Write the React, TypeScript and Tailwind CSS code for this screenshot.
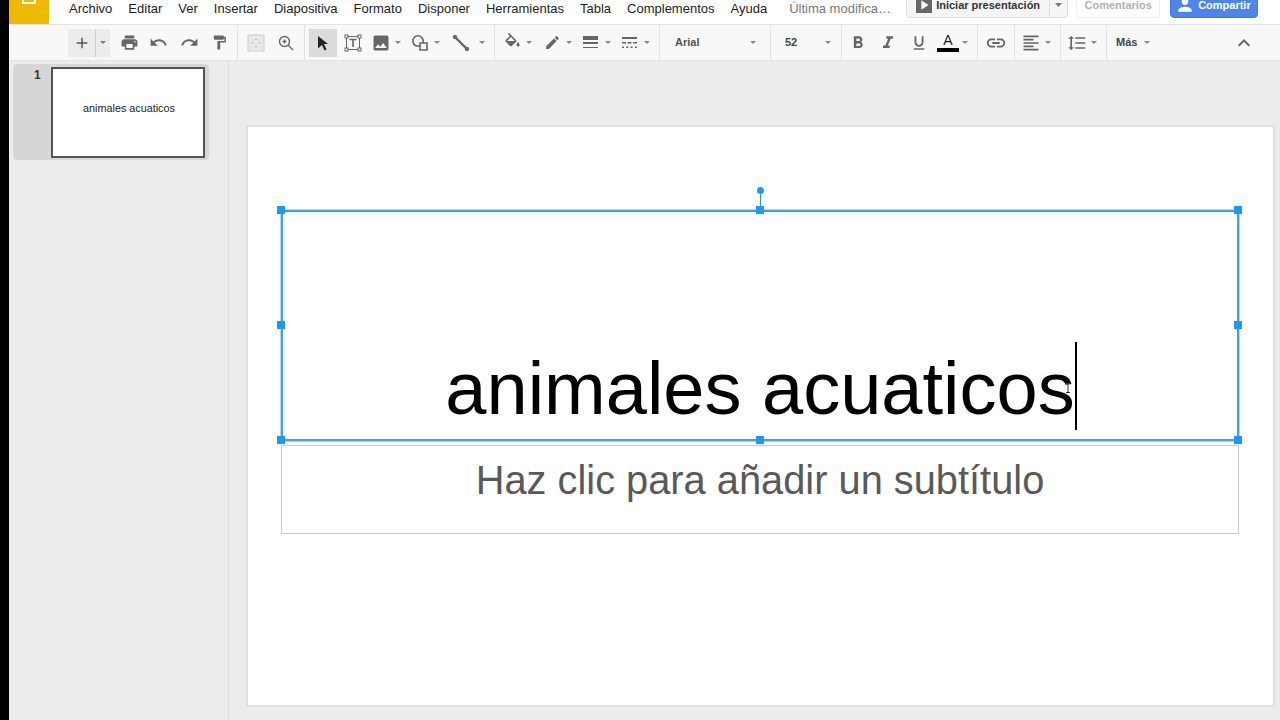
import type { ReactNode } from "react";
import {
  MdAdd,
  MdEdit,
  MdFormatAlignLeft,
  MdFormatBold,
  MdFormatItalic,
  MdFormatLineSpacing,
  MdFormatPaint,
  MdFormatUnderlined,
  MdImage,
  MdKeyboardArrowUp,
  MdLink,
  MdPerson,
  MdPlayArrow,
  MdPrint,
  MdRedo,
  MdUndo,
} from "react-icons/md";

const menus = ["Archivo", "Editar", "Ver", "Insertar", "Diapositiva", "Formato", "Disponer", "Herramientas", "Tabla", "Complementos", "Ayuda"];
const arial = "font-['Liberation_Sans',Arial,sans-serif]";

function Sep({ className = "" }: { className?: string }) {
  return <div className={`h-[35px] w-px shrink-0 bg-[#e2e2e2] ${className}`} />;
}

function Slot({ className = "", children }: { className?: string; children: ReactNode }) {
  return <div className={`flex h-[35px] w-6 shrink-0 items-center justify-center text-[#666] ${className}`}>{children}</div>;
}

function Caret({ className = "" }: { className?: string }) {
  return (
    <div className={`flex h-[35px] w-2.5 shrink-0 items-center justify-center ${className}`}>
      <svg width="6" height="3" viewBox="0 0 6 3">
        <path d="M0 0h6L3 3z" fill="#888" />
      </svg>
    </div>
  );
}

function Handle({ className }: { className: string }) {
  return <div className={`absolute h-2 w-2 bg-[#1a9bf0] ${className}`} />;
}

function Toolbar() {
  return (
    <div className="flex h-9 shrink-0 items-center border-b border-[#e4e4e4] bg-[#f8f8f8]">
      <div className="ml-[59px] flex h-[28px] w-[42px] shrink-0 bg-[#ececec]">
        <div className="flex w-7 items-center justify-center border-r border-[#d0d0d0] text-[#555]">
          <MdAdd size={18} />
        </div>
        <div className="flex flex-1 items-center justify-center">
          <svg width="6" height="3" viewBox="0 0 6 3">
            <path d="M0 0h6L3 3z" fill="#777" />
          </svg>
        </div>
      </div>
      <Slot className="ml-[7px]"><MdPrint size={19} /></Slot>
      <Slot className="ml-[5px]"><MdUndo size={19} /></Slot>
      <Slot className="ml-[7px]"><MdRedo size={19} /></Slot>
      <Slot className="ml-[6px]"><MdFormatPaint size={17} /></Slot>
      <Sep className="ml-[6px]" />

      <Slot className="ml-[6px]">
        <svg width="18" height="18" viewBox="0 0 18 18">
          <rect x="1" y="1" width="16" height="16" fill="#e9e9e9" stroke="#ccc" />
          <path d="M9 4.500l1.500 1.500h-3zM9 13.500L7.500 12h3zM4.500 9L6 7.500v3zM13.500 9L12 7.500v3z" fill="#bbb" />
        </svg>
      </Slot>
      <Slot className="ml-[6px]">
        <svg width="18" height="18" viewBox="0 0 18 18" fill="none" stroke="#666" strokeWidth="1.4">
          <circle cx="7.500" cy="7.500" r="5" />
          <path d="M11 11l5 5M5.500 7.500h4M7.500 5.500v4" />
        </svg>
      </Slot>
      <Sep className="ml-[6px]" />

      <div className="ml-1 flex h-[28px] w-7 shrink-0 items-center justify-center bg-[#dcdcdc]">
        <svg width="14" height="16" viewBox="0 0 14 16">
          <path d="M2 1l10 8H8l2.500 5.500-2 1L6 10l-4 3.500z" fill="#222" />
        </svg>
      </div>
      <Slot className="ml-1">
        <svg width="18" height="18" viewBox="0 0 18 18" fill="none" stroke="#666">
          <rect x="2.500" y="2.500" width="13" height="13" />
          <rect x="1" y="1" width="3" height="3" fill="#f8f8f8" />
          <rect x="14" y="1" width="3" height="3" fill="#f8f8f8" />
          <rect x="1" y="14" width="3" height="3" fill="#f8f8f8" />
          <rect x="14" y="14" width="3" height="3" fill="#f8f8f8" />
          <path d="M5.500 5.500h7M9 5.500v7.500" strokeWidth="1.6" />
        </svg>
      </Slot>
      <Slot className="ml-1"><MdImage size={20} /></Slot>
      <Caret />
      <Slot className="ml-[5px]">
        <svg width="18" height="18" viewBox="0 0 18 18" fill="none" stroke="#666" strokeWidth="1.6">
          <circle cx="7" cy="7" r="5.200" />
          <path d="M9 9h7v7H9z" fill="#f8f8f8" />
        </svg>
      </Slot>
      <Caret />
      <Slot className="ml-[7px]">
        <svg width="18" height="18" viewBox="0 0 18 18" stroke="#666" fill="#666">
          <path d="M3 3l12 12" strokeWidth="2.400" />
          <circle cx="3" cy="3" r="1.800" />
          <circle cx="15" cy="15" r="1.800" />
        </svg>
      </Slot>
      <Caret className="ml-1" />
      <Sep className="ml-[7px]" />

      <Slot className="ml-[5px]">
        <svg width="19" height="19" viewBox="0 0 24 24" fill="#666">
          <path d="M16.560 8.940L7.620 0 6.210 1.410l2.380 2.380-5.150 5.150c-.59.59-.59 1.540 0 2.120l5.500 5.500c.29.29.68.44 1.060.44s.77-.15 1.060-.44l5.500-5.500c.59-.58.59-1.530 0-2.120zM5.210 10L10 5.210 14.790 10H5.210zM19 11.500s-2 2.170-2 3.500c0 1.100.9 2 2 2s2-.9 2-2c0-1.330-2-3.500-2-3.500z" />
        </svg>
      </Slot>
      <Caret />
      <Slot className="ml-[6px]"><MdEdit size={17} /></Slot>
      <Caret />
      <Slot className="ml-[5px]">
        <svg width="16" height="14" viewBox="0 0 16 14" fill="#666">
          <rect y="0" width="15" height="4" />
          <rect y="6" width="15" height="2" />
          <rect y="11" width="15" height="1" />
        </svg>
      </Slot>
      <Caret />
      <Slot className="ml-[5px]">
        <svg width="16" height="14" viewBox="0 0 16 14" fill="#666">
          <rect y="1" width="15" height="2" />
          <path d="M0 6h4v1.500H0zM5.500 6h4v1.500h-4zM11 6h4v1.500h-4z" />
          <path d="M0 10.500h2V12H0zM4.300 10.500h2V12h-2zM8.600 10.500h2V12h-2zM13 10.500h2V12h-2z" />
        </svg>
      </Slot>
      <Caret />
      <Sep className="ml-[7px]" />

      <div className={`ml-[15px] w-[73px] shrink-0 text-[11px] font-bold text-[#555] ${arial}`}>Arial</div>
      <Caret />
      <Sep className="ml-3" />
      <div className={`ml-3.5 w-[38px] shrink-0 text-[11px] font-bold text-[#444] ${arial}`}>52</div>
      <Caret />
      <Sep className="ml-2" />

      <Slot className="ml-1"><MdFormatBold size={20} /></Slot>
      <Slot className="ml-[6px]"><MdFormatItalic size={20} /></Slot>
      <Slot className="ml-[7px]"><MdFormatUnderlined size={18} /></Slot>
      <Slot className="ml-[5px]">
        <div className={`flex w-[22px] flex-col items-center text-[14px] leading-[14px] text-[#222] ${arial}`}>
          A
          <div className="mt-px h-1 w-[22px] bg-black" />
        </div>
      </Slot>
      <Caret />
      <Sep className="ml-[7px]" />

      <Slot className="ml-[6px]"><MdLink size={22} /></Slot>
      <Sep className="ml-[6px]" />
      <Slot className="ml-1"><MdFormatAlignLeft size={20} /></Slot>
      <Caret />
      <Sep className="ml-[7px]" />
      <Slot className="ml-1"><MdFormatLineSpacing size={20} /></Slot>
      <Caret />
      <Sep className="ml-[7px]" />

      <div className={`ml-[9px] w-[22px] shrink-0 text-[11px] font-bold text-[#444] ${arial}`}>Más</div>
      <Caret className="ml-1" />
      <Slot className="ml-auto mr-6"><MdKeyboardArrowUp size={24} /></Slot>
    </div>
  );
}

export default function App() {
  return (
    <div className={`flex h-[720px] w-[1280px] overflow-hidden bg-[#ececec] ${arial}`}>
      <div className="w-[9px] shrink-0 bg-black" />
      <div className="flex min-w-0 flex-1 flex-col">
        {/* title bar, scrolled a bit out of the top of the capture */}
        <div className="flex h-[25px] shrink-0 items-end overflow-hidden border-b border-[#e4e4e4] bg-white">
          <div className="flex h-6 w-10 shrink-0 justify-center self-start bg-[#eeb900]">
            <div className="h-1 w-[14px] rounded-b-[1px] border-2 border-t-0 border-white" />
          </div>
          <div className="ml-5 flex h-[17px] gap-4 self-start text-[13px] leading-[17px] text-[#222]">
            {menus.map((m) => (
              <span key={m}>{m}</span>
            ))}
          </div>
          <span className="ml-[22px] w-[101px] shrink-0 self-start whitespace-nowrap text-[13px] leading-[17px] text-[#777]">Última modifica…</span>
          <div className="mb-[6px] ml-4 flex h-[26px] w-[162px] shrink-0 items-center rounded-sm border border-[#dcdcdc] bg-[#f5f5f5]">
            <div className="ml-[9px] flex h-4 w-4 items-center justify-center bg-[#666]">
              <MdPlayArrow size={16} className="text-[#f5f5f5]" />
            </div>
            <span className="ml-[4px] w-[113px] text-[11px] font-bold text-[#333]">Iniciar presentación</span>
            <div className="flex h-full flex-1 items-center justify-center border-l border-[#dcdcdc]">
              <svg width="7" height="4" viewBox="0 0 7 4">
                <path d="M0 0h7L3.500 4z" fill="#777" />
              </svg>
            </div>
          </div>
          <div className="mb-[6px] ml-2 flex h-[26px] w-[84px] shrink-0 items-center justify-center rounded-sm border border-[#eee] bg-white text-[11px] font-bold text-[#b0b0b0]">Comentarios</div>
          <div className="mb-[6px] ml-2.5 flex h-[26px] w-[88px] shrink-0 items-center rounded-sm border border-[#3f78d8] bg-[#4d86e8] text-[11px] font-bold text-white">
            <MdPerson size={20} className="ml-1" />
            <span className="ml-[3px]">Compartir</span>
          </div>
        </div>

        <Toolbar />

        <div className="flex min-h-0 flex-1">
          <div className="w-5 shrink-0 grow-0 basis-[220px] border-r border-[#dcdcdc] pl-1 pt-[3px]">
            <div className="flex h-24 w-[196px] rounded-sm bg-[#d6d6d6] pr-1 pt-[3px]">
              <span className="ml-[21px] mt-px w-[17px] text-xs font-bold leading-[14px] text-[#333]">1</span>
              <div className="flex h-[91px] w-[154px] items-center justify-center border-2 border-[#555] bg-white pb-[9px] pl-[2px] text-[10.8px] text-[#222]">
                animales acuaticos
              </div>
            </div>
          </div>

          <div className="min-w-0 flex-1 pl-[18px] pt-[65px]">
            <div className="relative h-[580px] w-[1027px] border border-[#dcdcdc] bg-white shadow-[0_0_2px_rgba(0,0,0,0.1)]">
              {/* title placeholder */}
              <div className="absolute left-[33px] top-[83px] flex h-[231px] w-[958px] items-end justify-center border-2 border-[#3d9fee] pb-[8px] text-[74px] leading-[85px] text-black shadow-[0_0_0_1px_#b5daf8]">
                <span className="relative whitespace-nowrap">
                  animales acuaticos
                  <span className="absolute -right-[2px] top-[-4px] h-[88px] w-[2px] bg-black" />
                </span>
              </div>
              <Handle className="left-[29px] top-[79px]" />
              <Handle className="left-[508px] top-[79px]" />
              <Handle className="left-[986px] top-[79px]" />
              <Handle className="left-[29px] top-[194px]" />
              <Handle className="left-[986px] top-[194px]" />
              <Handle className="left-[29px] top-[309px]" />
              <Handle className="left-[508px] top-[309px]" />
              <Handle className="left-[986px] top-[309px]" />
              <div className="absolute left-[512px] top-[63px] h-[17px] w-px bg-[#1a9bf0]" />
              <div className="absolute left-[509px] top-[60px] h-[7px] w-[7px] rounded-full bg-[#1a9bf0]" />
              <svg className="absolute left-[817px] top-[256px]" width="6" height="10" viewBox="0 0 6 10" fill="none" stroke="#333">
                <path d="M0 .5h6M3 .5v9M1 9.500h4" />
              </svg>

              {/* subtitle placeholder */}
              <div className="absolute left-[33px] top-[318px] flex h-[89px] w-[958px] items-center justify-center border border-[#ccc] pb-[20px] text-[39.8px] leading-[46px] text-[#595959]">
                Haz clic para añadir un subtítulo
              </div>
            </div>
          </div>
        </div>
      </div>
    </div>
  );
}
